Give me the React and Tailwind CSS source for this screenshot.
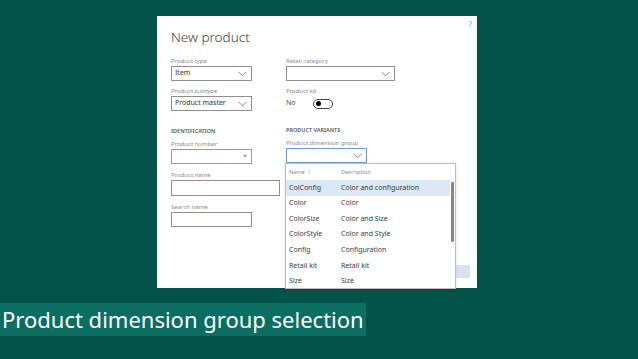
import React from 'react';

const font = { fontFamily: '"Noto Sans", "Open Sans", sans-serif' };

function Chevron() {
  return (
    <svg width="9" height="6" viewBox="0 0 9 6" className="shrink-0">
      <path d="M0.5 0.8 L4.5 4.8 L8.5 0.8" fill="none" stroke="#666" strokeWidth="0.8" />
    </svg>
  );
}

function Label({ children }) {
  return <div className="text-[6px] leading-[8px] text-[#8a8a8a]">{children}</div>;
}

function Select({ value, w, border = 'border-[#8f8f8f]' }) {
  return (
    <div className={`flex items-center justify-between h-[15px] border ${border} bg-white pl-[3px] pr-[4px]`} style={{ width: w }}>
      <span className="text-[7px] text-[#333]">{value}</span>
      <Chevron />
    </div>
  );
}

const rows = [
  ['ColConfig', 'Color and configuration'],
  ['Color', 'Color'],
  ['ColorSize', 'Color and Size'],
  ['ColorStyle', 'Color and Style'],
  ['Config', 'Configuration'],
  ['Retail kit', 'Retail kit'],
  ['Size', 'Size'],
];

function Dropdown() {
  return (
    <div className="absolute left-[128px] top-[147px] w-[171px] h-[126px] bg-white border border-[#bdbdbd] shadow-[0_1px_3px_rgba(0,0,0,0.12)] overflow-hidden">
      <div className="flex h-[16px] items-center text-[5.5px] text-[#888]">
        <span className="w-[55px] pl-[3px]">Name&nbsp;&nbsp;<span className="text-[7px]">↑</span></span>
        <span>Description</span>
      </div>
      <div className="relative">
        {rows.map(([n, d], i) => (
          <div
            key={n}
            className={`flex h-[15.6px] items-center text-[7px] text-[#3a3a3a] mr-[5px] ${i === 0 ? 'bg-[#dce8f6]' : ''}`}
          >
            <span className="w-[55px] pl-[3px]">{n}</span>
            <span>{d}</span>
          </div>
        ))}
        <div className="absolute right-[1px] top-[2px] w-[3px] h-[60px] bg-[#858585] rounded-[1px]" />
      </div>
    </div>
  );
}

export default function App() {
  return (
    <div className="w-[638px] h-[359px] bg-[#04534a] overflow-hidden" style={font}>
      <div className="pt-[16px] pl-[157px]">
        <div className="relative w-[320px] h-[272px] bg-white pl-[14px] pt-[12px]">
          <div className="absolute right-[5px] top-[3px] text-[8px] text-[#aaa]">?</div>
          <div className="text-[13.5px] leading-[18px] font-light text-[#3a3a3a]">New product</div>
          <div className="flex mt-[11px]">
            <div className="w-[115px] flex flex-col">
              <Label>Product type</Label>
              <div className="mt-[1px]"><Select value="Item" w={81} /></div>
              <div className="mt-[6px]"><Label>Product subtype</Label></div>
              <div className="mt-[1px]"><Select value="Product master" w={81} /></div>
              <div className="mt-[16px] text-[5.5px] leading-[8px] font-semibold text-[#555]">IDENTIFICATION</div>
              <div className="mt-[5px]"><Label>Product number</Label></div>
              <div className="mt-[1px] flex items-center justify-end w-[81px] h-[15px] border border-[#e47a7a] pr-[4px]">
                <span className="text-[7px] text-[#d44] leading-none">*</span>
              </div>
              <div className="mt-[7px]"><Label>Product name</Label></div>
              <div className="mt-[1px] w-[109px] h-[16px] border border-[#8f8f8f]" />
              <div className="mt-[7px]"><Label>Search name</Label></div>
              <div className="mt-[1px] w-[81px] h-[15px] border border-[#8f8f8f]" />
            </div>
            <div className="flex flex-col">
              <Label>Retail category</Label>
              <div className="mt-[1px]"><Select value="" w={109} /></div>
              <div className="mt-[6px]"><Label>Product kit</Label></div>
              <div className="mt-[3px] flex items-center h-[11px]">
                <span className="w-[27px] text-[7px] text-[#444]">No</span>
                <div className="flex items-center w-[20px] h-[10px] rounded-full border border-[#444] pl-[2px]">
                  <div className="w-[5px] h-[5px] rounded-full bg-black" />
                </div>
              </div>
              <div className="mt-[17px] text-[5.5px] leading-[8px] font-semibold text-[#555]">PRODUCT VARIANTS</div>
              <div className="mt-[5px]"><Label>Product dimension group</Label></div>
              <div className="mt-[1px]"><Select value="" w={81} border="border-[#6b9ad4]" /></div>
            </div>
          </div>
          <div className="absolute left-[298px] top-[249px] w-[15px] h-[13px] bg-[#d5e3f3]" />
          <Dropdown />
        </div>
      </div>
      <div className="mt-[15px] inline-block bg-[#0c6d63] h-[33px] pr-[2px]">
        <div className="pl-[2px] text-[22px] leading-[33px] text-white">Product dimension group selection</div>
      </div>
    </div>
  );
}
